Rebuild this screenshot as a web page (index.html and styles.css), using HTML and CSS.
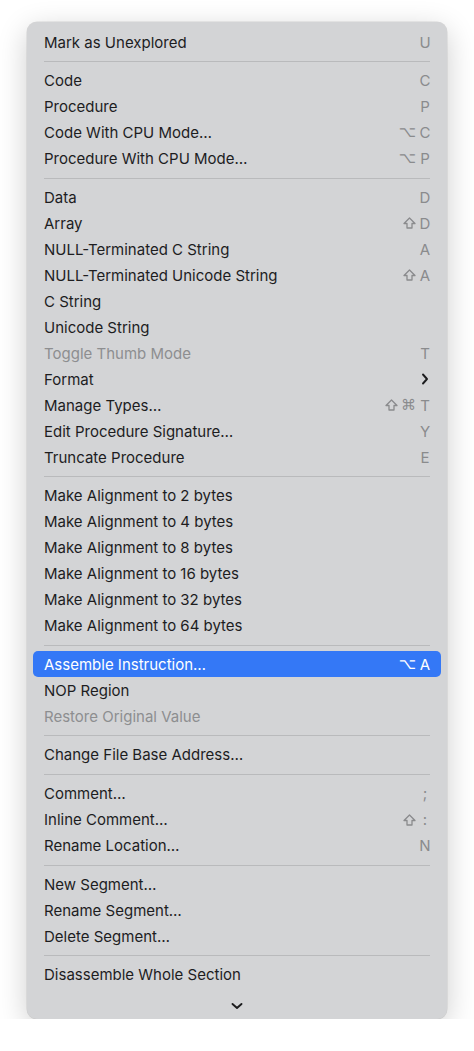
FILE: index.html
```html
<!DOCTYPE html>
<html lang="en">
<head>
    <meta charset="UTF-8">
    <meta content="width=device-width" name="viewport">
    <title>Context menu</title>
    <link rel="stylesheet" href="styles.css">
</head>
<body>
    <div class="menu">
        <div class="item"><span class="label">Mark as Unexplored</span><span class="keys"><span class="key">U</span></span></div>
        <div class="sep"></div>
        <div class="item"><span class="label">Code</span><span class="keys"><span class="key">C</span></span></div>
        <div class="item"><span class="label">Procedure</span><span class="keys"><span class="key">P</span></span></div>
        <div class="item"><span class="label">Code With CPU Mode…</span><span class="keys"><span class="mod">⌥</span><span class="key">C</span></span></div>
        <div class="item"><span class="label">Procedure With CPU Mode…</span><span class="keys"><span class="mod">⌥</span><span class="key">P</span></span></div>
        <div class="sep"></div>
        <div class="item"><span class="label">Data</span><span class="keys"><span class="key">D</span></span></div>
        <div class="item"><span class="label">Array</span><span class="keys"><svg class="shift" width="13" height="12" viewBox="0 0 13 12"><path d="M6.5 1 L12 6.5 H9 V11 H4 V6.5 H1 Z" /></svg><span class="key">D</span></span></div>
        <div class="item"><span class="label">NULL-Terminated C String</span><span class="keys"><span class="key">A</span></span></div>
        <div class="item"><span class="label">NULL-Terminated Unicode String</span><span class="keys"><svg class="shift" width="13" height="12" viewBox="0 0 13 12"><path d="M6.5 1 L12 6.5 H9 V11 H4 V6.5 H1 Z" /></svg><span class="key">A</span></span></div>
        <div class="item"><span class="label">C String</span></div>
        <div class="item"><span class="label">Unicode String</span></div>
        <div class="item disabled"><span class="label">Toggle Thumb Mode</span><span class="keys"><span class="key">T</span></span></div>
        <div class="item"><span class="label">Format</span>
            <svg class="arrow" width="8" height="12" viewBox="0 0 8 12"><path d="M2 1.5 L6 6 L2 10.5" fill="none" stroke="#1c1c1e" stroke-width="1.9" stroke-linecap="round" stroke-linejoin="round"/></svg>
        </div>
        <div class="item"><span class="label">Manage Types…</span><span class="keys"><svg class="shift" width="13" height="12" viewBox="0 0 13 12"><path d="M6.5 1 L12 6.5 H9 V11 H4 V6.5 H1 Z" /></svg><span class="mod">⌘</span><span class="key">T</span></span></div>
        <div class="item"><span class="label">Edit Procedure Signature…</span><span class="keys"><span class="key">Y</span></span></div>
        <div class="item"><span class="label">Truncate Procedure</span><span class="keys"><span class="key">E</span></span></div>
        <div class="sep"></div>
        <div class="item"><span class="label">Make Alignment to 2 bytes</span></div>
        <div class="item"><span class="label">Make Alignment to 4 bytes</span></div>
        <div class="item"><span class="label">Make Alignment to 8 bytes</span></div>
        <div class="item"><span class="label">Make Alignment to 16 bytes</span></div>
        <div class="item"><span class="label">Make Alignment to 32 bytes</span></div>
        <div class="item"><span class="label">Make Alignment to 64 bytes</span></div>
        <div class="sep"></div>
        <div class="item active"><span class="label">Assemble Instruction…</span><span class="keys"><span class="mod">⌥</span><span class="key">A</span></span></div>
        <div class="item"><span class="label">NOP Region</span></div>
        <div class="item disabled"><span class="label">Restore Original Value</span></div>
        <div class="sep"></div>
        <div class="item"><span class="label">Change File Base Address…</span></div>
        <div class="sep"></div>
        <div class="item"><span class="label">Comment…</span><span class="keys"><span class="key">;</span></span></div>
        <div class="item"><span class="label">Inline Comment…</span><span class="keys"><svg class="shift" width="13" height="12" viewBox="0 0 13 12"><path d="M6.5 1 L12 6.5 H9 V11 H4 V6.5 H1 Z" /></svg><span class="key">:</span></span></div>
        <div class="item"><span class="label">Rename Location…</span><span class="keys"><span class="key">N</span></span></div>
        <div class="sep"></div>
        <div class="item"><span class="label">New Segment…</span></div>
        <div class="item"><span class="label">Rename Segment…</span></div>
        <div class="item"><span class="label">Delete Segment…</span></div>
        <div class="sep"></div>
        <div class="item"><span class="label">Disassemble Whole Section</span></div>
        <div class="more">
            <svg width="12" height="8" viewBox="0 0 12 8"><path d="M1.5 2 L6 6 L10.5 2" fill="none" stroke="#1c1c1e" stroke-width="1.9" stroke-linecap="round" stroke-linejoin="round"/></svg>
        </div>
    </div>
</body>
</html>
```

FILE: styles.css
```css
* {
    margin: 0;
    padding: 0;
    box-sizing: border-box;
}
body {
    background-color: #fff;
    font-family: Inter, "Helvetica Neue", Arial, sans-serif;
    font-size: 15px;
    color: #1d1d1f;
    padding: 22px 0 0 27px;
}
.menu {
    width: 420px;
    padding: 7px 6px 0;
    background-color: #d3d4d6;
    border-radius: 10px;
    box-shadow: 0 0 0 0.5px rgba(0,0,0,0.12), 0 8px 30px rgba(0,0,0,0.2);
}

.item {
    display: flex;
    align-items: center;
    justify-content: space-between;
    height: 26px;
    padding: 0 11px;
    border-radius: 5px;
}
.item .label {
    white-space: nowrap;
}
.item.disabled {
    color: #8d8e90;
}
.item.active {
    background-color: #3478f6;
    color: #fff;
}

.keys {
    display: flex;
    align-items: center;
    gap: 3px;
    color: #8a8b8d;
}
.active .keys {
    color: #fff;
}
.keys .mod {
    font-family: "DejaVu Sans", sans-serif;
    font-size: 15px;
    line-height: 1;
}
.keys .shift {
    display: block;
    fill: none;
    stroke: currentColor;
    stroke-width: 1.3;
    stroke-linejoin: round;
}
.keys .key {
    width: 12px;
    text-align: center;
    margin-right: -1px;
}
.arrow {
    display: block;
    margin-right: 1px;
}

.sep {
    height: 1px;
    margin: 6px 11px 5.6px;
    background-color: #b9babc;
}

.more {
    display: flex;
    justify-content: center;
    align-items: center;
    height: 31px;
    padding-top: 6px;
}
.more svg {
    display: block;
}
```
